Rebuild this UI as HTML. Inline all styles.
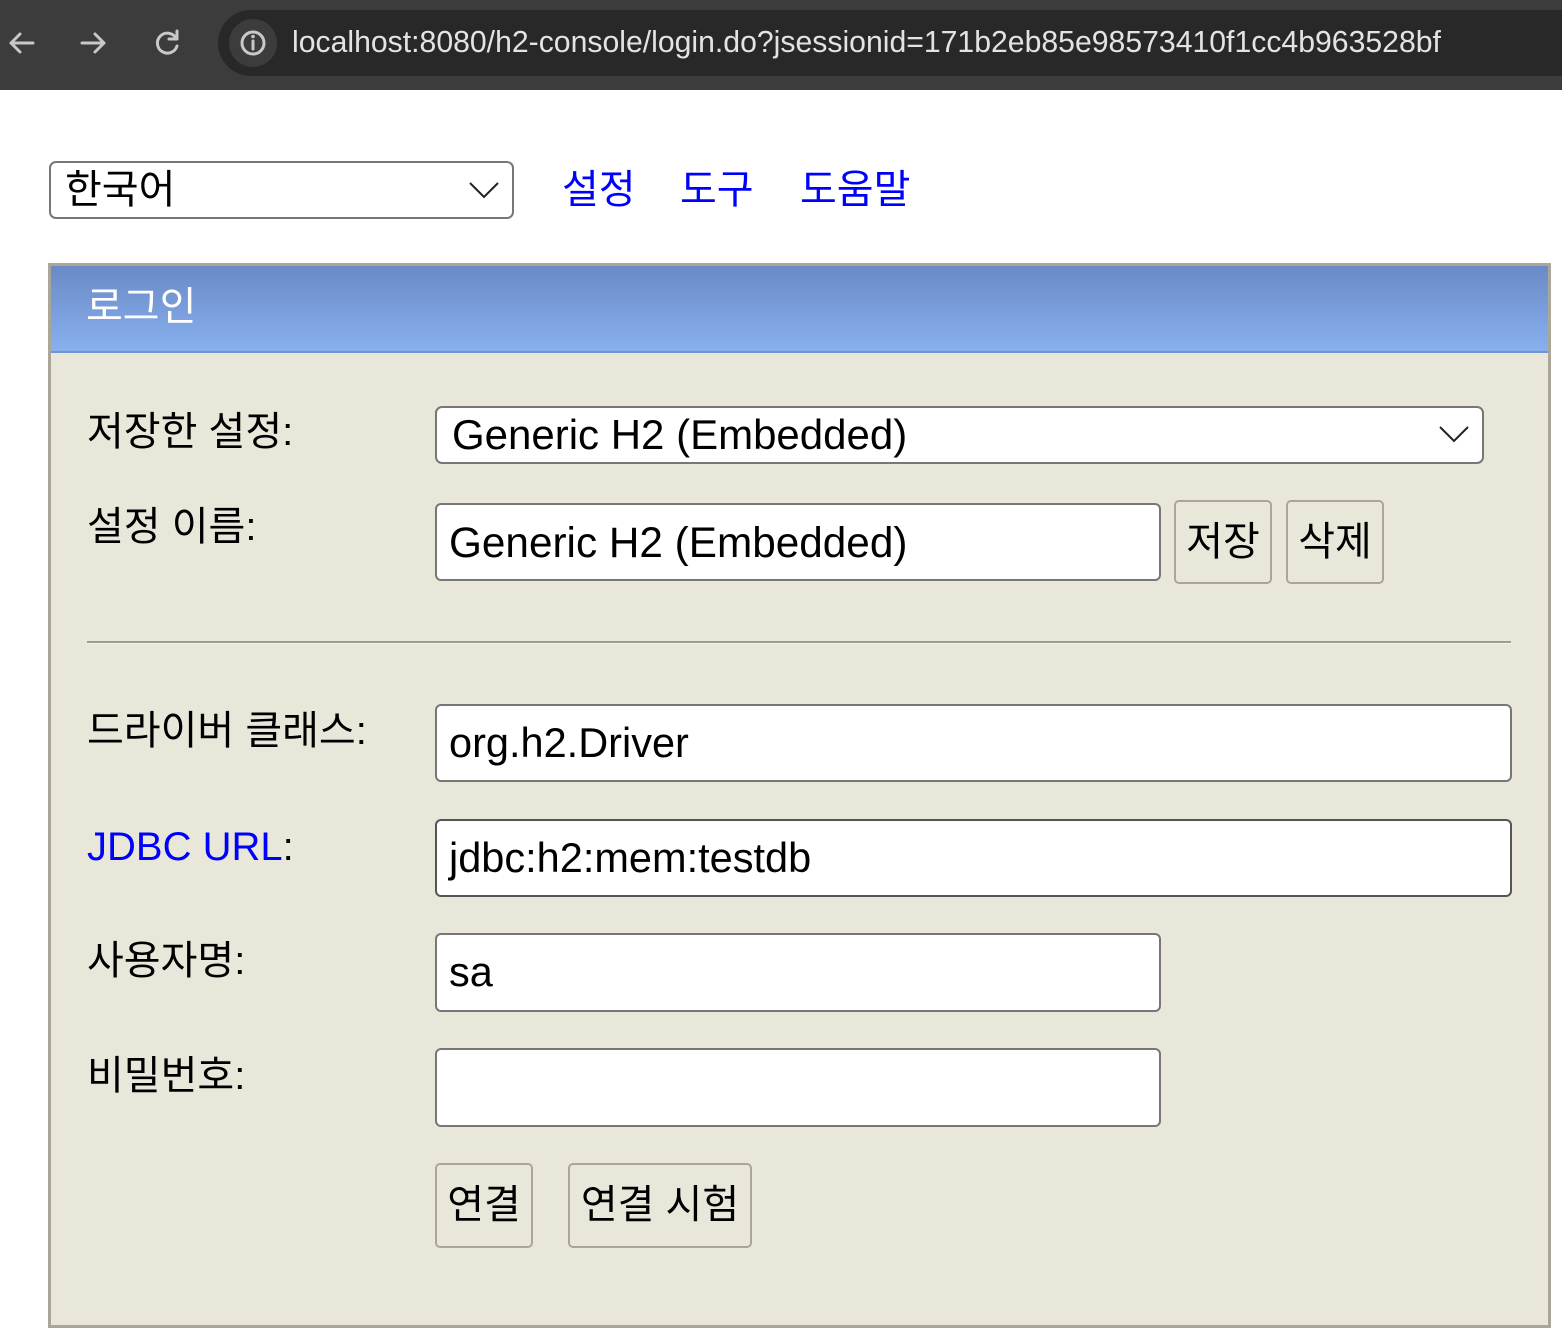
<!DOCTYPE html>
<html><head><meta charset="utf-8"><style>
*{margin:0;padding:0;box-sizing:border-box}
body{width:1562px;height:1341px;background:#fff;position:relative;overflow:hidden;font-family:"Liberation Sans","Noto Sans CJK KR","NanumGothic",sans-serif;color:#000}
.a{position:absolute}
.t{position:absolute;font-size:40px;line-height:50px;white-space:nowrap}
.box{position:absolute;background:#fff;border:2px solid #777;border-radius:6px}
.btn{position:absolute;background:#e9e7da;border:2px solid #aaa698;border-radius:5px;font-size:40px;text-align:center;white-space:nowrap}
.it{position:absolute;left:12px;font-size:41.5px;line-height:50px;white-space:nowrap}
</style></head><body>
<div class="a" style="left:0;top:0;width:1562px;height:90px;background:#3c3c3c"></div>
<div class="a" style="left:218px;top:10px;width:1400px;height:66px;background:#282828;border-radius:33px"></div>
<div class="a" style="left:229px;top:19px;width:48px;height:48px;background:#3c3c3c;border-radius:50%"></div>
<svg class="a" style="left:0;top:0" width="300" height="90">
<g fill="none" stroke="#c8c8c8" stroke-width="3" stroke-linecap="round" stroke-linejoin="round">
<path d="M33 43H11M20 34l-9 9 9 9"/>
<path d="M82 43h22M95 34l9 9-9 9"/>
<path d="M176 38a10 10 0 1 0 1 8"/><path d="M177 31v8h-8"/>
<circle cx="253" cy="43" r="11"/><path d="M253 41v8"/>
</g><circle cx="253" cy="36.5" r="1.8" fill="#c8c8c8"/></svg>
<div class="a" style="left:292px;top:23px;font-size:30.2px;line-height:40px;color:#e3e3e3;white-space:nowrap">localhost:8080/h2-console/login.do?jsessionid=171b2eb85e98573410f1cc4b963528bf</div>

<div class="box" style="left:49px;top:161px;width:465px;height:58px;border-radius:7px"></div>
<div class="t" style="left:65px;top:165px">한국어</div>
<svg class="a" style="left:468px;top:180px" width="32" height="20"><path d="M2 3l14 14 14-14" fill="none" stroke="#222" stroke-width="2"/></svg>
<div class="t" style="left:562px;top:165px;color:#00f">설정</div>
<div class="t" style="left:680px;top:165px;color:#00f">도구</div>
<div class="t" style="left:800px;top:165px;color:#00f">도움말</div>

<div class="a" style="left:48px;top:263px;width:1503px;height:1065px;background:#e9e7da;border:3px solid #aaa698"></div>
<div class="a" style="left:51px;top:266px;width:1497px;height:87px;background:linear-gradient(#6a8ac6,#88b0ee);border-bottom:2px solid #6f94d0"></div>
<div class="t" style="left:86px;top:282px;color:#fff">로그인</div>

<div class="t" style="left:87px;top:407px">저장한 설정:</div>
<div class="box" style="left:435px;top:406px;width:1049px;height:58px;border-radius:7px"></div>
<div class="t" style="left:452px;top:410px;font-size:42px">Generic H2 (Embedded)</div>
<svg class="a" style="left:1438px;top:424px" width="32" height="20"><path d="M2 3l14 14 14-14" fill="none" stroke="#222" stroke-width="2"/></svg>

<div class="t" style="left:87px;top:502px">설정 이름:</div>
<div class="box" style="left:435px;top:503px;width:726px;height:78px"><div class="it" style="top:13px;font-size:42.3px">Generic H2 (Embedded)</div></div>
<div class="btn" style="left:1174px;top:500px;width:98px;height:84px;line-height:80px">저장</div>
<div class="btn" style="left:1286px;top:500px;width:98px;height:84px;line-height:80px">삭제</div>

<div class="a" style="left:87px;top:641px;width:1424px;height:3px;background:#9c9c98;border-bottom:1px solid #f4f4ee"></div>

<div class="t" style="left:87px;top:706px">드라이버 클래스:</div>
<div class="box" style="left:435px;top:704px;width:1077px;height:78px"><div class="it" style="top:12px">org.h2.Driver</div></div>

<div class="t" style="left:87px;top:822px"><span style="color:#00f">JDBC URL</span>:</div>
<div class="box" style="left:435px;top:819px;width:1077px;height:78px;border-color:#555"><div class="it" style="top:12px">jdbc:h2:mem:testdb</div></div>

<div class="t" style="left:87px;top:936px">사용자명:</div>
<div class="box" style="left:435px;top:933px;width:726px;height:79px"><div class="it" style="top:12px">sa</div></div>

<div class="t" style="left:87px;top:1051px">비밀번호:</div>
<div class="box" style="left:435px;top:1048px;width:726px;height:79px"></div>

<div class="btn" style="left:435px;top:1163px;width:98px;height:85px;line-height:80px">연결</div>
<div class="btn" style="left:568px;top:1163px;width:184px;height:85px;line-height:80px">연결 시험</div>
</body></html>
